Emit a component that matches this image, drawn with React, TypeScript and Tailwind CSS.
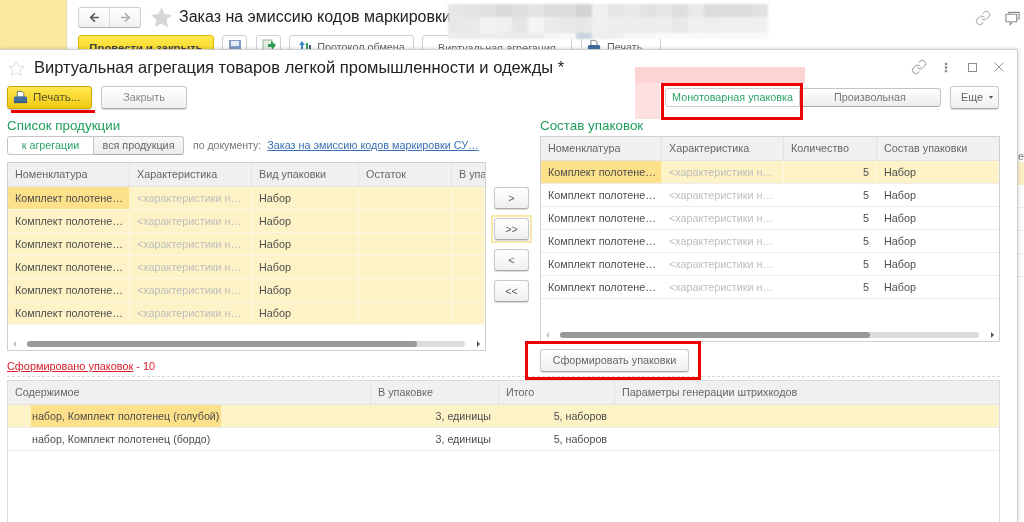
import { ArrowLeft, ArrowRight, Link, X } from "lucide-react";

const blurTop = [
  "bg-[#e6e6e6]", "bg-[#e3e3e3]", "bg-[#e2e2e2]", "bg-[#d9d9d9]", "bg-[#dfdfdf]", "bg-[#e4e4e4]", "bg-[#dcdcdc]", "bg-[#dcdcdc]", "bg-[#d3d3d3]", "bg-[#f0f0f0]",
  "bg-[#e6e6e6]", "bg-[#e9e9e9]", "bg-[#e2e2e2]", "bg-[#e6e6e6]", "bg-[#dedede]", "bg-[#eaeaea]", "bg-[#dcdcdc]", "bg-[#dcdcdc]", "bg-[#dcdcdc]", "bg-[#e2e2e2]",
];
const blurMid = [
  "bg-[#e8e8e8]", "bg-[#e9e9e9]", "bg-[#f2f2f2]", "bg-[#f0f0f0]", "bg-[#e5e5e5]", "bg-[#f4f4f4]", "bg-[#ebebeb]", "bg-[#e8e8e8]", "bg-[#e7e7e7]", "bg-[#f0f0f0]",
  "bg-[#eeeeee]", "bg-[#eeeeee]", "bg-[#ececec]", "bg-[#eeeeee]", "bg-[#e8e8e8]", "bg-[#f0f0f0]", "bg-[#eeeeee]", "bg-[#f0f0f0]", "bg-[#f0f0f0]", "bg-[#f0f0f0]",
];
const blurLow = [
  "bg-[#ececec]", "bg-[#ececec]", "bg-[#ebebeb]", "bg-[#ebebeb]", "bg-[#ebebeb]", "bg-[#ececec]", "bg-[#f4f4f4]", "bg-[#f8f8f8]", "bg-[#c9d3e0]", "bg-[#eeeeee]",
  "bg-[#eeeeee]", "bg-[#f6f6f6]", "bg-[#f8f8f8]", "bg-[#fafafa]", "bg-[#fafafa]", "bg-[#fafafa]", "bg-[#fafafa]", "bg-[#fafafa]", "bg-[#fafafa]", "bg-[#fafafa]",
];

function PrinterIcon({ className }: { className?: string }) {
  return (
    <svg viewBox="0 0 16 16" className={className}>
      <path d="M4.5 1.5h5l2 2v4h-7z" fill="#fff" stroke="#5d7183" strokeWidth="1" />
      <path d="M1 8.5c0-1 .7-1.7 1.7-1.7h10.6c1 0 1.7.7 1.7 1.7v4H1z" fill="#3f6f9f" />
      <rect x="1" y="12" width="14" height="2" fill="#34587c" />
    </svg>
  );
}

function StarIcon({ className, fill, stroke }: { className?: string; fill: string; stroke: string }) {
  return (
    <svg viewBox="0 0 20 20" className={className}>
      <path d="M10 1.5l2.6 5.7 6.2.7-4.6 4.2 1.3 6.1L10 15.1l-5.5 3.1 1.3-6.1L1.2 7.9l6.2-.7z" fill={fill} stroke={stroke} strokeWidth="1" />
    </svg>
  );
}

function ToolIcon({ kind }: { kind: "save" | "post" | "bars" }) {
  if (kind === "save")
    return (
      <svg viewBox="0 0 14 14" className="w-[14px] h-[14px]">
        <rect x="1" y="1" width="12" height="12" fill="#7f9fc6" />
        <rect x="3" y="2" width="8" height="5" fill="#e8eef5" />
      </svg>
    );
  if (kind === "post")
    return (
      <svg viewBox="0 0 14 14" className="w-[14px] h-[14px]">
        <rect x="1" y="1" width="9" height="12" fill="#e4efe4" stroke="#9ab09a" />
        <path d="M6 5h3V2l5 4-4 5V8H6z" fill="#2f9e55" />
      </svg>
    );
  return (
    <svg viewBox="0 0 14 14" className="w-[14px] h-[14px]">
      <path d="M1 6l3-4 3 4H5v7H3V6z" fill="#3b8bc9" />
      <rect x="8" y="4" width="2" height="9" fill="#2f9e55" />
      <rect x="11" y="6" width="2" height="7" fill="#4a5d70" />
    </svg>
  );
}

function Button({ className, children }: { className?: string; children: React.ReactNode }) {
  return (
    <div className={`flex items-center justify-center h-full rounded-[3px] border border-[#c9c9c9] border-b-[#a9a9a9] bg-gradient-to-b from-white to-[#efefef] text-[#666] text-[10.8px] whitespace-nowrap shadow-[0_1px_1px_rgba(0,0,0,0.15)] ${className ?? ""}`}>
      {children}
    </div>
  );
}

type Cell = { text: string; tone?: "muted" | "right" };

function Row({ cells, grid, bg, first, line }: { cells: Cell[]; grid: string; bg: string; first: string; line: string }) {
  return (
    <div className={`grid ${grid} h-[23px] ${bg} border-b ${line}`}>
      {cells.map((c, i) => (
        <div
          key={i}
          className={`flex items-center px-[7px] overflow-hidden whitespace-nowrap text-[10.8px] border-r border-white/50 ${i === 0 ? first : ""} ${c.tone === "muted" ? "text-[#bdbdbd]" : "text-[#4d4d4d]"} ${c.tone === "right" ? "justify-end" : ""}`}
        >
          {c.text}
        </div>
      ))}
    </div>
  );
}

function Header({ labels, grid }: { labels: string[]; grid: string }) {
  return (
    <div className={`grid ${grid} h-[24px] bg-[#f0f0f0] border-b border-[#e4e4e4]`}>
      {labels.map((l) => (
        <div key={l} className="flex items-center px-[7px] overflow-hidden whitespace-nowrap text-[10.8px] text-[#666] border-r border-[#e2e2e2] last:border-r-0">
          {l}
        </div>
      ))}
    </div>
  );
}

function Scrollbar({ thumb }: { thumb: string }) {
  return (
    <div className="flex items-center justify-between h-[12px] px-[5px]">
      <span className="w-0 h-0 border-y-[3px] border-y-transparent border-r-[3px] border-r-[#c4c4c4]" />
      <div className="flex-1 ml-[11px] mr-[12px] h-[6px] rounded-[3px] bg-[#dcdcdc]">
        <div className={`h-full rounded-[3px] bg-[#999] ${thumb}`} />
      </div>
      <span className="w-0 h-0 border-y-[3px] border-y-transparent border-l-[3px] border-l-[#555]" />
    </div>
  );
}

const leftGrid = "grid-cols-[122px_122px_107px_93px_1fr]";
const rightGrid = "grid-cols-[121px_122px_93px_1fr]";
const bottomGrid = "grid-cols-[363px_128px_116px_1fr]";

const leftCells: Cell[] = [
  { text: "Комплект полотене…" },
  { text: "<характеристики н…", tone: "muted" },
  { text: "Набор" },
  { text: "" },
  { text: "" },
];
const rightCells: Cell[] = [
  { text: "Комплект полотене…" },
  { text: "<характеристики н…", tone: "muted" },
  { text: "5", tone: "right" },
  { text: "Набор" },
];

export default function App() {
  return (
    <div className="relative w-[1024px] h-[522px] overflow-hidden bg-white font-['Liberation_Sans',Arial,sans-serif] blur-[0.35px]">
      {/* окно за формой */}
      <div className="flex h-full">
        <div className="w-[67px] shrink-0 bg-[#fbe9a0] border-r border-[#e8dcae]" />
        <div className="flex-1 min-w-0 pl-[11px]">
          <div className="flex items-center h-[34px]">
            <div className="flex w-[63px] h-[21px] rounded-[3px] border border-[#cfcfcf] border-b-[#b0b0b0] bg-gradient-to-b from-white to-[#f1f1f1]">
              <div className="flex flex-1 items-center justify-center border-r border-[#ddd]">
                <ArrowLeft className="w-[13px] h-[13px] text-[#555]" strokeWidth={3} />
              </div>
              <div className="flex flex-1 items-center justify-center">
                <ArrowRight className="w-[13px] h-[13px] text-[#aaa]" strokeWidth={3} />
              </div>
            </div>
            <StarIcon className="w-[21px] h-[21px] ml-[10px]" fill="#d6d6d6" stroke="#d6d6d6" />
            <span className="ml-[7px] text-[16px] text-[#222] whitespace-nowrap">Заказ на эмиссию кодов маркировки</span>
          </div>
          <div className="flex items-start h-[14px] mt-[1px] gap-[8px] overflow-hidden">
            <div className="flex justify-center w-[136px] h-[24px] pt-[4px] rounded-[3px] border border-[#d9b800] bg-gradient-to-b from-[#ffe94d] to-[#f7d200] text-[11.3px] text-[#444] font-bold whitespace-nowrap">Провести и закрыть</div>
            <div className="flex justify-center w-[25px] h-[24px] pt-[3px] rounded-[3px] border border-[#cfcfcf]"><ToolIcon kind="save" /></div>
            <div className="flex justify-center ml-px w-[25px] h-[24px] pt-[3px] rounded-[3px] border border-[#cfcfcf]"><ToolIcon kind="post" /></div>
            <div className="flex justify-center gap-[5px] w-[125px] h-[24px] pt-[3px] rounded-[3px] border border-[#cfcfcf] text-[10.8px] text-[#666] whitespace-nowrap"><ToolIcon kind="bars" />Протокол обмена</div>
            <div className="flex justify-center w-[150px] h-[24px] pt-[4px] rounded-[3px] border border-[#cfcfcf] text-[10.8px] text-[#666] whitespace-nowrap">Виртуальная агрегация</div>
            <div className="flex gap-[6px] ml-px pl-[5px] w-[80px] h-[24px] pt-[3px] rounded-[3px] border border-[#cfcfcf] text-[10.8px] text-[#666] whitespace-nowrap"><PrinterIcon className="w-[14px] h-[14px]" />Печать</div>
          </div>
          <div className="flex flex-col mt-[101px] ml-[940px] w-[10px]">
            <div className="h-[12px] leading-[12px] overflow-hidden text-[10.8px] text-[#777] whitespace-nowrap">ер</div>
            <div className="h-[23px] bg-[#fdf1c4]" />
            <div className="h-[23px] border-b border-[#eee]" />
            <div className="h-[23px] border-b border-[#eee]" />
            <div className="h-[23px] border-b border-[#eee]" />
            <div className="h-[23px] border-b border-[#eee]" />
          </div>
        </div>
      </div>

      {/* размытая заливка в заголовке */}
      <div className="absolute left-[448px] top-[4px] w-[320px] grid grid-cols-[repeat(20,16px)] grid-rows-[13px_16px_6px] blur-[1px]">
        {[...blurTop, ...blurMid, ...blurLow].map((c, i) => (
          <div key={i} className={c} />
        ))}
      </div>
      <div className="absolute top-[10px] left-[975px] flex items-center gap-[14px] text-[#9a9a9a]">
        <Link className="w-[16px] h-[16px]" strokeWidth={1.4} />
        <svg viewBox="0 0 16 16" className="w-[15px] h-[15px]" fill="none" stroke="#8a8a8a" strokeWidth="1.2">
          <path d="M4 3V1.5h11v7h-2" />
          <path d="M1 3.5h11.5v8H8l-2.5 3v-3H1z" fill="#fff" />
        </svg>
      </div>

      {/* форма */}
      <div className="absolute left-0 top-[49px] w-[1018px] h-[473px] flex flex-col bg-white border-r border-t border-[#cfcfcf] shadow-[0_0_4px_rgba(0,0,0,0.2)]">
        <div className="flex items-center h-[36px] pl-[8px] pr-[10px] pb-[2px]">
          <StarIcon className="w-[17px] h-[17px] mt-[3px]" fill="#fff" stroke="#cfd7e0" />
          <span className="ml-[9px] text-[16.5px] text-[#222] whitespace-nowrap">Виртуальная агрегация товаров легкой промышленности и одежды *</span>
          <div className="ml-auto flex items-center text-[#8c8c8c]">
            <Link className="w-[16px] h-[16px]" strokeWidth={1.4} />
            <svg viewBox="0 0 4 14" className="w-[4px] h-[11px] ml-[17px]" fill="#8c8c8c">
              <rect x="0.5" y="1" width="3" height="3" />
              <rect x="0.5" y="5.5" width="3" height="3" />
              <rect x="0.5" y="10" width="3" height="3" />
            </svg>
            <div className="ml-[20px] w-[9px] h-[9px] border border-[#8c8c8c]" />
            <X className="ml-[14px] w-[16px] h-[16px]" strokeWidth={1.4} />
          </div>
        </div>

        <div className="flex items-center h-[23px] pl-[7px] pr-[18px]">
          <div className="flex items-center gap-[5px] w-[85px] pl-[5px] h-full rounded-[3px] border border-[#c7a800] bg-gradient-to-b from-[#ffe94d] to-[#f0c800] text-[11.5px] text-[#55532c] whitespace-nowrap shadow-[0_1px_1px_rgba(0,0,0,0.2)]">
            <PrinterIcon className="w-[15px] h-[15px]" />
            Печать...
          </div>
          <Button className="w-[86px] ml-[9px] !text-[#888]">Закрыть</Button>
          <div className="ml-auto flex h-[19px] w-[276px]">
            <div className="flex items-center justify-center w-[135px] rounded-l-[3px] border border-[#ccc] bg-white text-[10.8px] text-[#2aa468] whitespace-nowrap">Монотоварная упаковка</div>
            <div className="flex items-center justify-center flex-1 rounded-r-[3px] border border-l-0 border-[#c4c4c4] border-b-[#a9a9a9] bg-gradient-to-b from-white to-[#ececec] text-[10.8px] text-[#777] whitespace-nowrap">Произвольная</div>
          </div>
          <Button className="w-[49px] ml-[9px] pl-[5px] gap-[6px]">
            Еще
            <span className="w-0 h-0 border-x-[2.5px] border-x-transparent border-t-[3px] border-t-[#555]" />
          </Button>
        </div>

        <div className="flex h-[259px] mt-[9px] border-b border-dashed border-[#d8d8d8] mx-[7px] w-[993px]">
          <div className="w-[479px] flex flex-col">
            <div className="h-[18px] text-[13.4px] leading-[15px] text-[#1e9e5e] whitespace-nowrap">Список продукции</div>
            <div className="flex items-center h-[19px]">
              <div className="flex h-full w-[177px]">
                <div className="flex items-center justify-center w-[87px] rounded-l-[3px] border border-[#c4c4c4] bg-white text-[10.8px] text-[#2aa468] whitespace-nowrap">к агрегации</div>
                <div className="flex items-center justify-center flex-1 rounded-r-[3px] border border-l-0 border-[#c4c4c4] border-b-[#a9a9a9] bg-gradient-to-b from-[#f8f8f8] to-[#ececec] text-[10.8px] text-[#666] whitespace-nowrap">вся продукция</div>
              </div>
              <span className="ml-[9px] text-[10.5px] text-[#777] whitespace-nowrap">по документу:</span>
              <span className="ml-[6px] text-[10.8px] text-[#3a6fb5] underline whitespace-nowrap">Заказ на эмиссию кодов маркировки СУ…</span>
            </div>
            <div className="mt-[7px] h-[189px] flex flex-col border border-[#cfcfcf] overflow-hidden">
              <Header labels={["Номенклатура", "Характеристика", "Вид упаковки", "Остаток", "В упаковке"]} grid={leftGrid} />
              {[0, 1, 2, 3, 4, 5].map((i) => (
                <Row key={i} cells={leftCells} grid={leftGrid} line="border-[#fbf8ea]" bg="bg-[#fdf3c6]" first={i === 0 ? "bg-[#fde08a]" : ""} />
              ))}
              <div className="mt-auto"><Scrollbar thumb="w-[89%]" /></div>
            </div>
            <div className="mt-[7px] text-[10.9px] text-[#d8202a] whitespace-nowrap"><span className="underline">Сформировано упаковок</span> - 10</div>
          </div>

          <div className="flex flex-col w-[35px] ml-[8px] mt-[69px] gap-[9px]">
            <Button className="!h-[22px]">&gt;</Button>
            <div className="-mx-[3px] -my-[3px] p-[1px] border-2 border-[#f7e7a8]">
              <Button className="!h-[22px]">&gt;&gt;</Button>
            </div>
            <Button className="!h-[22px]">&lt;</Button>
            <Button className="!h-[22px]">&lt;&lt;</Button>
          </div>

          <div className="w-[460px] ml-[11px] flex flex-col">
            <div className="h-[18px] text-[13.4px] leading-[15px] text-[#1e9e5e] whitespace-nowrap">Состав упаковок</div>
            <div className="h-[206px] flex flex-col border border-[#cfcfcf] overflow-hidden">
              <Header labels={["Номенклатура", "Характеристика", "Количество", "Состав упаковки"]} grid={rightGrid} />
              {[0, 1, 2, 3, 4, 5].map((i) => (
                <Row key={i} cells={rightCells} grid={rightGrid} line="border-[#ececec]" bg={i === 0 ? "bg-[#fdf3c6]" : "bg-white"} first={i === 0 ? "bg-[#fde08a]" : ""} />
              ))}
              <div className="mt-auto"><Scrollbar thumb="w-[74%]" /></div>
            </div>
            <Button className="!h-[23px] w-[149px] mt-[7px]">Сформировать упаковки</Button>
          </div>
        </div>

        <div className="mt-[3px] ml-[7px] w-[993px] flex-1 flex flex-col border border-b-0 border-[#dcdcdc]">
          <Header labels={["Содержимое", "В упаковке", "Итого", "Параметры генерации штрихкодов"]} grid={bottomGrid} />
          <div className={`grid ${bottomGrid} h-[23px] bg-[#fdf3c6] border-b border-[#ececec] text-[10.7px] text-[#4d4d4d]`}>
            <div className="flex items-center pl-[23px]">
              <span className="flex items-center h-full pl-[1px] w-[190px] bg-[#fde08a] whitespace-nowrap">набор, Комплект полотенец (голубой)</span>
            </div>
            <div className="flex items-center justify-end px-2">3, единицы</div>
            <div className="flex items-center justify-end px-2">5, наборов</div>
            <div />
          </div>
          <div className={`grid ${bottomGrid} h-[23px] border-b border-[#ececec] text-[10.7px] text-[#4d4d4d]`}>
            <div className="flex items-center pl-[24px] whitespace-nowrap">набор, Комплект полотенец (бордо)</div>
            <div className="flex items-center justify-end px-2">3, единицы</div>
            <div className="flex items-center justify-end px-2">5, наборов</div>
            <div />
          </div>
        </div>
      </div>

      {/* пометки поверх скриншота */}
      <div className="absolute left-[635px] top-[67px] w-[170px] h-[16px] bg-[#fdd4d4]" />
      <div className="absolute left-[635px] top-[83px] w-[25px] h-[36px] bg-[#fde0e0]" />
      <div className="absolute left-[661px] top-[83px] w-[142px] h-[37px] border-[3px] border-[#ee0000]" />
      <div className="absolute left-[525px] top-[341px] w-[176px] h-[39px] border-[3px] border-[#ee0000]" />
      <div className="absolute left-[11px] top-[110px] w-[84px] h-[3px] bg-[#ee0000]" />
    </div>
  );
}
